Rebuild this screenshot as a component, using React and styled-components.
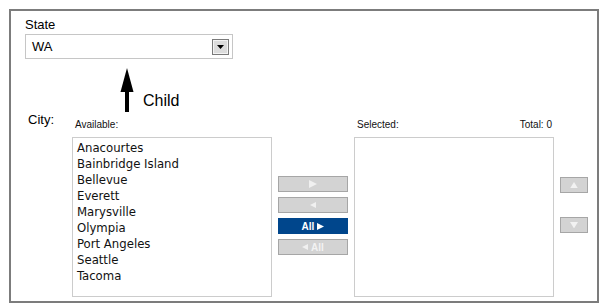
import React from "react";
import styled, { createGlobalStyle } from "styled-components";

const Global = createGlobalStyle`
  html, body { margin: 0; padding: 0; background: #ffffff; }
  body { font-family: "Liberation Sans", Arial, sans-serif; color: #000; }
`;

const Page = styled.div`
  padding: 9px 0 0 9px;
`;

const Frame = styled.div`
  box-sizing: border-box;
  width: 590px;
  height: 294px;
  border: 2px solid #7c7c7c;
  display: flex;
  flex-direction: column;
`;

const StateField = styled.div`
  display: flex;
  flex-direction: column;
  gap: 2px;
  padding: 6px 0 0 14px;
`;

const Label = styled.div`
  font-size: 13px;
  line-height: 15px;
  padding-left: ${(p) => p.$indent || 0}px;
`;

const Select = styled.div`
  box-sizing: border-box;
  width: 208px;
  height: 25px;
  border: 1px solid #c6c6c6;
  display: flex;
  align-items: center;
  justify-content: space-between;
  padding: 0 3px 0 6px;
  font-size: 13px;
`;

const DropButton = styled.div`
  box-sizing: border-box;
  width: 17px;
  height: 16px;
  border: 1px solid #7a7a7a;
  box-shadow: inset 0 0 0 1px #f4f4f4;
  background: #dcdcdc;
  display: flex;
  align-items: center;
  justify-content: center;
`;

const Annotation = styled.div`
  height: 53px;
  display: flex;
  align-items: flex-start;
  padding-left: 109px;
  gap: 9px;
`;

const ArrowSvg = styled.svg`
  margin-top: 9px;
  display: block;
`;

const AnnotationText = styled.div`
  font-size: 16px;
  line-height: 18px;
  margin-top: 33px;
`;

const Bottom = styled.div`
  display: flex;
  align-items: flex-start;
`;

const CityLabel = styled.div`
  width: 44px;
  padding-left: 17px;
  font-size: 13px;
  line-height: 15px;
`;

const ListColumn = styled.div`
  display: flex;
  flex-direction: column;
  gap: 6px;
  padding-top: 7px;
  width: 200px;
`;

const ListHeader = styled.div`
  display: flex;
  justify-content: space-between;
  font-size: 10px;
  line-height: 12px;
  padding: 0 2px 0 3px;
  color: #111;
`;

const ListBox = styled.div`
  box-sizing: border-box;
  height: 160px;
  border: 1px solid #cccccc;
  padding: 2px 0 0 4px;
  font-family: "DejaVu Sans Condensed", "DejaVu Sans", sans-serif;
  font-size: 13px;
  line-height: 16px;
  color: #111;
`;

const ButtonColumn = styled.div`
  display: flex;
  flex-direction: column;
  gap: ${(p) => p.$gap}px;
  padding-top: ${(p) => p.$top}px;
  margin: 0 6px;
`;

const MoveButton = styled.div`
  box-sizing: border-box;
  width: ${(p) => p.$w}px;
  height: 16px;
  display: flex;
  align-items: center;
  justify-content: center;
  font-size: 10px;
  font-weight: bold;
  gap: 3px;
  background: ${(p) => (p.$active ? "#00468c" : "#d3d3d3")};
  border: 1px solid ${(p) => (p.$active ? "#00468c" : "#a6a6a6")};
  color: ${(p) => (p.$active ? "#ffffff" : "#f2f2f2")};
`;

const cities = [
  "Anacourtes",
  "Bainbridge Island",
  "Bellevue",
  "Everett",
  "Marysville",
  "Olympia",
  "Port Angeles",
  "Seattle",
  "Tacoma",
];

const Tri = ({ dir, color, size = 7 }) => {
  const s = size;
  const pts = {
    right: `0,0 ${s},${s / 2} 0,${s}`,
    left: `${s},0 0,${s / 2} ${s},${s}`,
    up: `0,${s * 0.8} ${s / 2},0 ${s},${s * 0.8}`,
    down: `0,0 ${s / 2},${s * 0.8} ${s},0`,
  }[dir];
  const w = s;
  const h = dir === "up" || dir === "down" ? s * 0.8 : s;
  return (
    <svg width={w} height={h} viewBox={`0 0 ${w} ${h}`}>
      <polygon points={pts} fill={color} />
    </svg>
  );
};

export default function App() {
  return (
    <>
      <Global />
      <Page>
        <Frame>
          <StateField>
            <Label>State</Label>
            <Select>
              <span>WA</span>
              <DropButton>
                <svg width="7" height="4" viewBox="0 0 7 4">
                  <polygon points="0,0 7,0 3.5,4" fill="#000" />
                </svg>
              </DropButton>
            </Select>
          </StateField>
          <Annotation>
            <ArrowSvg width="14" height="44" viewBox="0 0 14 44">
              <polygon points="7,0 13.5,24 0.5,24" fill="#000" />
              <rect x="5" y="22" width="4" height="22" fill="#000" />
            </ArrowSvg>
            <AnnotationText>Child</AnnotationText>
          </Annotation>
          <Bottom>
            <CityLabel>City:</CityLabel>
            <ListColumn>
              <ListHeader>
                <span>Available:</span>
              </ListHeader>
              <ListBox>
                {cities.map((c) => (
                  <div key={c}>{c}</div>
                ))}
              </ListBox>
            </ListColumn>
            <ButtonColumn $top={64} $gap={5}>
              <MoveButton $w={70}>
                <Tri dir="right" color="#f0f0f0" size={8} />
              </MoveButton>
              <MoveButton $w={70}>
                <Tri dir="left" color="#f0f0f0" size={6} />
              </MoveButton>
              <MoveButton $w={70} $active>
                <span>All</span>
                <Tri dir="right" color="#ffffff" size={7} />
              </MoveButton>
              <MoveButton $w={70}>
                <Tri dir="left" color="#f0f0f0" size={6} />
                <span>All</span>
              </MoveButton>
            </ButtonColumn>
            <ListColumn>
              <ListHeader>
                <span>Selected:</span>
                <span>Total: 0</span>
              </ListHeader>
              <ListBox />
            </ListColumn>
            <ButtonColumn $top={65} $gap={24}>
              <MoveButton $w={28}>
                <Tri dir="up" color="#f2f2f2" size={8} />
              </MoveButton>
              <MoveButton $w={28}>
                <Tri dir="down" color="#f2f2f2" size={8} />
              </MoveButton>
            </ButtonColumn>
          </Bottom>
        </Frame>
      </Page>
    </>
  );
}
